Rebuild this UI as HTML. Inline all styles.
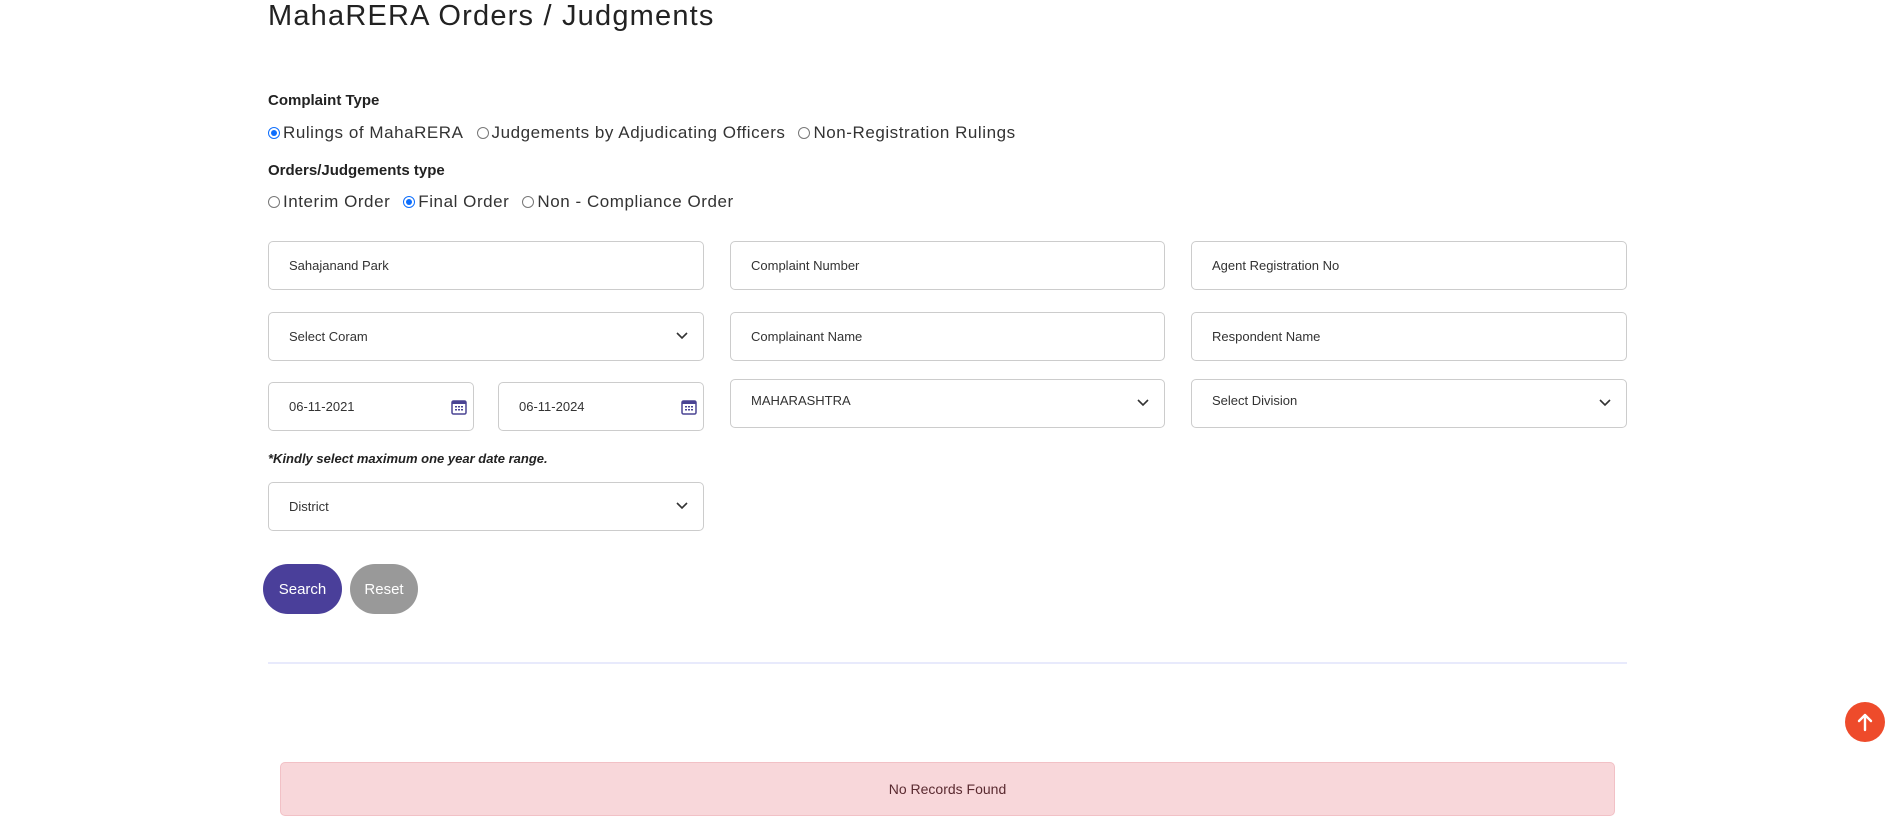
<!DOCTYPE html>
<html><head><meta charset="utf-8">
<style>
*{box-sizing:border-box;margin:0;padding:0}
body{width:1894px;height:819px;overflow:hidden;background:#fff;font-family:"Liberation Sans",sans-serif;color:#212529;position:relative}
.a{position:absolute}
h1{position:absolute;left:268px;top:0px;font-weight:400;font-size:29px;color:#222;letter-spacing:1.2px}
.lbl{font-weight:bold;font-size:15px;color:#222}
.radios{font-size:17px;color:#333;display:flex;align-items:center;letter-spacing:0.55px}
.r{width:12px;height:12px;border-radius:50%;border:1px solid #777;display:inline-block;margin-right:3px;position:relative}
.r.on{border:1px solid #0d6efd;background:#fff}
.r.on::after{content:"";position:absolute;left:2px;top:2px;width:6px;height:6px;border-radius:50%;background:#0d6efd}
.gap{display:inline-block;width:13px}
.in{position:absolute;border:1px solid #ccc;border-radius:5px;height:49px;font-size:13px;color:#333;padding-left:20px;display:flex;align-items:center}
.chev{position:absolute;right:14px;top:18px;width:14px;height:10px}
.cal{position:absolute;right:6px;top:16px;width:16px;height:16px}
.btn{position:absolute;border-radius:25px;color:#fff;font-size:15px;display:flex;align-items:center;justify-content:center;height:50px}
</style></head><body>
<h1>MahaRERA Orders / Judgments</h1>
<div class="a lbl" style="left:268px;top:92px">Complaint Type</div>
<div class="a radios" style="left:268px;top:123px"><span class="r on"></span>Rulings of MahaRERA<span class="gap"></span><span class="r"></span>Judgements by Adjudicating Officers<span class="gap"></span><span class="r"></span>Non-Registration Rulings</div>
<div class="a lbl" style="left:268px;top:162px">Orders/Judgements type</div>
<div class="a radios" style="left:268px;top:192px"><span class="r"></span>Interim Order<span class="gap"></span><span class="r on"></span>Final Order<span class="gap"></span><span class="r"></span>Non - Compliance Order</div>

<div class="in" style="left:268px;top:241px;width:436px">Sahajanand Park</div>
<div class="in" style="left:730px;top:241px;width:435px">Complaint Number</div>
<div class="in" style="left:1191px;top:241px;width:436px">Agent Registration No</div>

<div class="in" style="left:268px;top:312px;width:436px">Select Coram<svg class="chev" viewBox="0 0 14 10"><path d="M2 2l5 5 5-5" fill="none" stroke="#333" stroke-width="1.6"/></svg></div>
<div class="in" style="left:730px;top:312px;width:435px">Complainant Name</div>
<div class="in" style="left:1191px;top:312px;width:436px">Respondent Name</div>

<div class="in" style="left:268px;top:382px;width:206px">06-11-2021<svg class="cal" viewBox="0 0 16 16"><rect x="1" y="2" width="14" height="13" rx="1.5" fill="#fff" stroke="#4a4494" stroke-width="1.5"/><rect x="1" y="2" width="14" height="3" fill="#4a4494"/><g fill="#4a4494"><rect x="4" y="7" width="2" height="1.5"/><rect x="7" y="7" width="2" height="1.5"/><rect x="10" y="7" width="2" height="1.5"/><rect x="4" y="10" width="2" height="1.5"/><rect x="7" y="10" width="2" height="1.5"/><rect x="10" y="10" width="2" height="1.5"/></g></svg></div>
<div class="in" style="left:498px;top:382px;width:206px">06-11-2024<svg class="cal" viewBox="0 0 16 16"><rect x="1" y="2" width="14" height="13" rx="1.5" fill="#fff" stroke="#4a4494" stroke-width="1.5"/><rect x="1" y="2" width="14" height="3" fill="#4a4494"/><g fill="#4a4494"><rect x="4" y="7" width="2" height="1.5"/><rect x="7" y="7" width="2" height="1.5"/><rect x="10" y="7" width="2" height="1.5"/><rect x="4" y="10" width="2" height="1.5"/><rect x="7" y="10" width="2" height="1.5"/><rect x="10" y="10" width="2" height="1.5"/></g></svg></div>
<div class="in" style="left:730px;top:379px;width:435px;padding-bottom:6px">MAHARASHTRA<svg class="chev" viewBox="0 0 14 10"><path d="M2 2l5 5 5-5" fill="none" stroke="#333" stroke-width="1.6"/></svg></div>
<div class="in" style="left:1191px;top:379px;width:436px;padding-bottom:6px">Select Division<svg class="chev" viewBox="0 0 14 10"><path d="M2 2l5 5 5-5" fill="none" stroke="#333" stroke-width="1.6"/></svg></div>

<div class="a" style="left:268px;top:451px;font-size:13px;font-weight:bold;font-style:italic;color:#222">*Kindly select maximum one year date range.</div>
<div class="in" style="left:268px;top:482px;width:436px">District<svg class="chev" viewBox="0 0 14 10"><path d="M2 2l5 5 5-5" fill="none" stroke="#333" stroke-width="1.6"/></svg></div>

<div class="btn" style="left:263px;top:564px;width:79px;background:#4a3f9a">Search</div>
<div class="btn" style="left:350px;top:564px;width:68px;background:#999">Reset</div>

<div class="a" style="left:268px;top:662px;width:1359px;height:2px;background:#e8eafc"></div>

<div class="a" style="left:1845px;top:702px;width:40px;height:40px;border-radius:50%;background:#ee4b2b"><svg width="40" height="40" viewBox="0 0 40 40"><path d="M20 28V13M14 19l6-6 6 6" fill="none" stroke="#fff" stroke-width="2.4" stroke-linecap="round" stroke-linejoin="round"/></svg></div>

<div class="a" style="left:280px;top:762px;width:1335px;height:54px;background:#f8d7da;border:1px solid #f2c1c6;border-radius:5px;display:flex;align-items:center;justify-content:center;font-size:14px;color:#5a2a30">No Records Found</div>
</body></html>
